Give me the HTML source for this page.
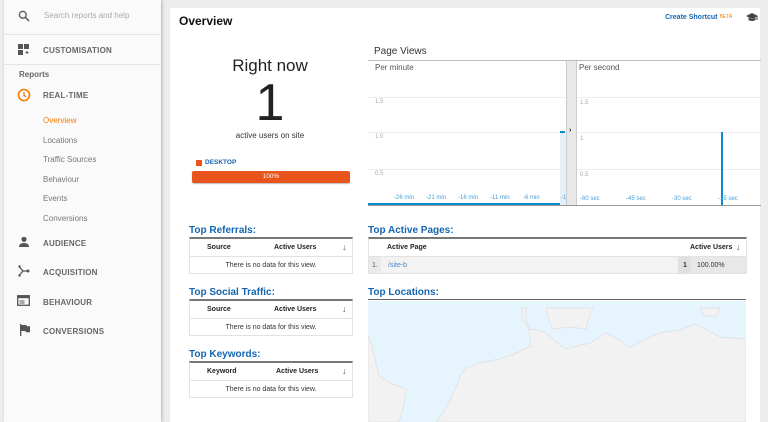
<!DOCTYPE html>
<html><head><meta charset="utf-8"><style>
*{margin:0;padding:0;box-sizing:border-box}
body{width:768px;height:422px;overflow:hidden;background:#ededed;font-family:"Liberation Sans",Arial,sans-serif;position:relative}
.a{position:absolute}
#side{left:4px;top:0;width:157px;height:422px;background:#fafafa;box-shadow:1px 0 3px rgba(0,0,0,.25)}
.nav{font-size:8px;font-weight:bold;color:#666;letter-spacing:.2px}
.sub{font-size:8px;color:#777}
#main{left:170px;top:8px;width:590px;height:414px;background:#fff}
.ttl{font-size:10px;font-weight:bold;color:#1565b0}
.tb{border:1px solid #e2e2e2;border-top:2px solid #777;background:#fff}
.th{font-size:7px;font-weight:bold;color:#222}
.nd{font-size:7px;color:#333}
.ax{font-size:6px;color:#aaa}
.xl{font-size:6px;color:#4a9fd8}
</style></head><body>
<div id="side" class="a">
  <svg class="a" style="left:14px;top:10px" width="12" height="12" viewBox="0 0 12 12"><circle cx="4.8" cy="4.8" r="3.4" fill="none" stroke="#666" stroke-width="1.5"/><path d="M7.3 7.3L11 11" stroke="#666" stroke-width="1.7"/></svg>
  <div class="a" style="left:40px;top:11px;font-size:8px;color:#aaa">Search reports and help</div>
  <div class="a" style="left:0;top:34px;width:157px;height:1px;background:#e5e5e5"></div>
  <svg class="a" style="left:14px;top:44px" width="12" height="12" viewBox="0 0 12 12" fill="#555"><rect x="0" y="0" width="5" height="5"/><rect x="6" y="0" width="5" height="5"/><rect x="0" y="6" width="5" height="5"/><path d="M7.5 8.5h3M9 7v3" stroke="#555" stroke-width="1"/></svg>
  <div class="a nav" style="left:39px;top:46px">CUSTOMISATION</div>
  <div class="a" style="left:0;top:64px;width:157px;height:1px;background:#e5e5e5"></div>
  <div class="a" style="left:15px;top:70px;font-size:8px;color:#666;font-weight:bold">Reports</div>
  <svg class="a" style="left:13px;top:88px" width="14" height="14" viewBox="0 0 14 14"><circle cx="7" cy="7" r="5.5" fill="none" stroke="#f57c00" stroke-width="1.6"/><path d="M7 4v3.3l2 1.5" fill="none" stroke="#f57c00" stroke-width="1.3"/></svg>
  <div class="a nav" style="left:39px;top:91px">REAL-TIME</div>
  <div class="a sub" style="left:39px;top:116px;color:#f57c00">Overview</div>
  <div class="a sub" style="left:39px;top:136px">Locations</div>
  <div class="a sub" style="left:39px;top:155px">Traffic Sources</div>
  <div class="a sub" style="left:39px;top:175px">Behaviour</div>
  <div class="a sub" style="left:39px;top:194px">Events</div>
  <div class="a sub" style="left:39px;top:214px">Conversions</div>
  <svg class="a" style="left:14px;top:236px" width="12" height="12" viewBox="0 0 12 12" fill="#555"><circle cx="6" cy="3.3" r="2.6"/><path d="M1 11c0-3 2.5-4 5-4s5 1 5 4z"/></svg>
  <div class="a nav" style="left:39px;top:239px">AUDIENCE</div>
  <svg class="a" style="left:14px;top:265px" width="12" height="12" viewBox="0 0 12 12"><path d="M1 1.5L5 6 1 10.5M5 6h5" fill="none" stroke="#555" stroke-width="1.3"/><circle cx="10" cy="6" r="1.5" fill="#555"/><circle cx="1.5" cy="1.5" r="1.2" fill="#555"/><circle cx="1.5" cy="10.5" r="1.2" fill="#555"/></svg>
  <div class="a nav" style="left:39px;top:268px">ACQUISITION</div>
  <svg class="a" style="left:13px;top:295px" width="13" height="11" viewBox="0 0 13 11"><rect x="0.7" y="0.7" width="11.6" height="9.6" fill="none" stroke="#555" stroke-width="1.3"/><rect x="0.7" y="0.7" width="11.6" height="2.5" fill="#555"/><path d="M2.5 6h5M2.5 8h5" stroke="#555"/></svg>
  <div class="a nav" style="left:39px;top:298px">BEHAVIOUR</div>
  <svg class="a" style="left:15px;top:324px" width="11" height="12" viewBox="0 0 11 12" fill="#555"><path d="M1 0h1.3v12H1zM2.3 1h5l.6 1.3H11v6H7l-.6-1.3H2.3z"/></svg>
  <div class="a nav" style="left:39px;top:327px">CONVERSIONS</div>
</div>

<div id="main" class="a">
  <div class="a" style="left:9px;top:6px;font-size:12px;font-weight:bold;color:#111">Overview</div>
  <div class="a" style="left:495px;top:6px;font-size:7px;font-weight:bold;color:#1565b0">Create Shortcut <span style="color:#f57c00;font-weight:normal;font-size:5px;vertical-align:top">BETA</span></div>
  <svg class="a" style="left:576px;top:5px" width="12" height="9" viewBox="0 0 12 9" fill="#444"><path d="M0 3L6 0l6 3-6 3z"/><path d="M2.5 4.5v2.5c1.5 1.3 5.5 1.3 7 0V4.5L6 6.3z"/><path d="M11 3v4" stroke="#444"/></svg>

  <div class="a" style="left:0;top:48px;width:200px;text-align:center;font-size:17px;color:#222">Right now</div>
  <div class="a" style="left:0;top:69px;width:200px;text-align:center;font-size:52px;color:#222;line-height:52px">1</div>
  <div class="a" style="left:0;top:123px;width:200px;text-align:center;font-size:8px;color:#333">active users on site</div>
  <div class="a" style="left:26px;top:152px;width:6px;height:6px;background:#e8541c"></div>
  <div class="a" style="left:35px;top:151px;font-size:6.5px;font-weight:bold;color:#1565b0">DESKTOP</div>
  <div class="a" style="left:22px;top:163px;width:158px;height:12px;background:#e8541c;border-radius:2px;box-shadow:0 1px 1px #bbb;color:#fff;font-size:6.5px;text-align:center;line-height:12px">100%</div>

  <div class="a" style="left:204px;top:38px;font-size:10px;color:#333">Page Views</div>
  <div class="a" style="left:198px;top:52px;width:393px;height:1px;background:#bbb"></div>
  <div class="a" style="left:198px;top:197px;width:393px;height:1px;background:#999"></div>
  <div class="a" style="left:396px;top:53px;width:11px;height:144px;background:#e8e8e8;border-left:1px solid #ccc;border-right:1px solid #ccc"></div>
  <div class="a" style="left:205px;top:55px;font-size:8px;color:#555">Per minute</div>
  <div class="a" style="left:409px;top:55px;font-size:8px;color:#555">Per second</div>
  <div class="a" style="left:198px;top:89px;width:198px;height:1px;background:#eee"></div>
  <div class="a" style="left:198px;top:124px;width:198px;height:1px;background:#eee"></div>
  <div class="a" style="left:198px;top:161px;width:198px;height:1px;background:#eee"></div>
  <div class="a" style="left:407px;top:89px;width:184px;height:1px;background:#eee"></div>
  <div class="a" style="left:407px;top:124px;width:184px;height:1px;background:#eee"></div>
  <div class="a" style="left:407px;top:161px;width:184px;height:1px;background:#eee"></div>
  <div class="a ax" style="left:205px;top:91px">1.5</div>
  <div class="a ax" style="left:205px;top:126px">1.0</div>
  <div class="a ax" style="left:205px;top:163px">0.5</div>
  <div class="a ax" style="left:410px;top:92px">1.5</div>
  <div class="a ax" style="left:410px;top:128px">1</div>
  <div class="a ax" style="left:410px;top:164px">0.5</div>
  <div class="a" style="left:390px;top:124px;width:6px;height:73px;background:#e3f0f9"></div>
  <div class="a" style="left:390px;top:123px;width:5px;height:2px;background:#0d8bd0"></div>
  <div class="a" style="left:198px;top:195px;width:192px;height:2px;background:#0d8bd0"></div>
  <div class="a" style="left:399px;top:119px;font-size:7px;font-weight:bold;color:#222">›</div>
  <div class="a" style="left:551px;top:124px;width:2px;height:73px;background:#0d8bd0"></div>
  <div class="a xl" style="left:224px;top:187px">-26 min</div>
  <div class="a xl" style="left:256px;top:187px">-21 min</div>
  <div class="a xl" style="left:288px;top:187px">-16 min</div>
  <div class="a xl" style="left:320px;top:187px">-11 min</div>
  <div class="a xl" style="left:353px;top:187px">-6 min</div>
  <div class="a xl" style="left:391px;top:187px">-1</div>
  <div class="a xl" style="left:410px;top:188px">-60 sec</div>
  <div class="a xl" style="left:456px;top:188px">-45 sec</div>
  <div class="a xl" style="left:502px;top:188px">-30 sec</div>
  <div class="a xl" style="left:548px;top:188px">-15 sec</div>

  <div class="a ttl" style="left:19px;top:217px">Top Referrals:</div>
  <div class="a tb" style="left:19px;top:229px;width:164px;height:37px"></div>
  <div class="a" style="left:20px;top:248px;width:162px;height:1px;background:#e2e2e2"></div>
  <div class="a th" style="left:37px;top:236px">Source</div><div class="a th" style="left:104px;top:236px">Active Users</div><div class="a" style="left:172px;top:234px;font-size:9px;color:#555">↓</div>
  <div class="a nd" style="left:19px;top:254px;width:164px;text-align:center">There is no data for this view.</div>

  <div class="a ttl" style="left:19px;top:279px">Top Social Traffic:</div>
  <div class="a tb" style="left:19px;top:291px;width:164px;height:37px"></div>
  <div class="a" style="left:20px;top:310px;width:162px;height:1px;background:#e2e2e2"></div>
  <div class="a th" style="left:37px;top:298px">Source</div><div class="a th" style="left:104px;top:298px">Active Users</div><div class="a" style="left:172px;top:296px;font-size:9px;color:#555">↓</div>
  <div class="a nd" style="left:19px;top:316px;width:164px;text-align:center">There is no data for this view.</div>

  <div class="a ttl" style="left:19px;top:341px">Top Keywords:</div>
  <div class="a tb" style="left:19px;top:353px;width:164px;height:37px"></div>
  <div class="a" style="left:20px;top:372px;width:162px;height:1px;background:#e2e2e2"></div>
  <div class="a th" style="left:37px;top:360px">Keyword</div><div class="a th" style="left:106px;top:360px">Active Users</div><div class="a" style="left:172px;top:358px;font-size:9px;color:#555">↓</div>
  <div class="a nd" style="left:19px;top:378px;width:164px;text-align:center">There is no data for this view.</div>

  <div class="a ttl" style="left:198px;top:217px">Top Active Pages:</div>
  <div class="a tb" style="left:198px;top:229px;width:379px;height:37px"></div>
  <div class="a" style="left:199px;top:248px;width:377px;height:17px;background:#f3f3f3;border-top:1px solid #e2e2e2"></div>
  <div class="a" style="left:199px;top:249px;width:12px;height:16px;background:#eaeaea"></div>
  <div class="a" style="left:508px;top:249px;width:13px;height:16px;background:#e0e0e0"></div>
  <div class="a" style="left:521px;top:249px;width:55px;height:16px;background:#e8e8e8"></div>
  <div class="a th" style="left:217px;top:236px">Active Page</div><div class="a th" style="left:520px;top:236px">Active Users</div><div class="a" style="left:566px;top:234px;font-size:9px;color:#555">↓</div>
  <div class="a nd" style="left:202px;top:254px;color:#555">1.</div>
  <div class="a nd" style="left:218px;top:254px;color:#4a86c0">/site-b</div>
  <div class="a nd" style="left:513px;top:254px;font-weight:bold">1</div>
  <div class="a nd" style="left:527px;top:254px">100.00%</div>

  <div class="a ttl" style="left:198px;top:279px">Top Locations:</div>
  <div class="a" style="left:198px;top:291px;width:378px;height:1px;background:#666"></div>
</div>
<svg class="a" style="left:368px;top:301px" width="378" height="121" viewBox="368 301 378 121">
  <rect x="368" y="301" width="378" height="121" fill="#e6f4fd"/>
  <g fill="#f2f2f2" stroke="#dedede" stroke-width="0.7">
    <path d="M521 308L523 320 529 329 531 346 512 355 499 359 480 363 466 368 460 376 458 383 452 395 448 406 436 422 746 422 746 339 720 337 696 324 680 330 659 333 640 342 629 348 620 340 606 333 590 343 566 349 556 342 546 333 538 330 529 329 526 318 526 308Z"/>
    <path d="M546 308L593 308 588 320 586 329 570 327 553 329 548 318Z"/>
    <path d="M368 336L372 345 379 376 392 384 406 389 404 405 399 422 368 422Z"/>
    <path d="M700 308L720 308 716 316 705 316Z"/>
  </g>
</svg>
</body></html>
